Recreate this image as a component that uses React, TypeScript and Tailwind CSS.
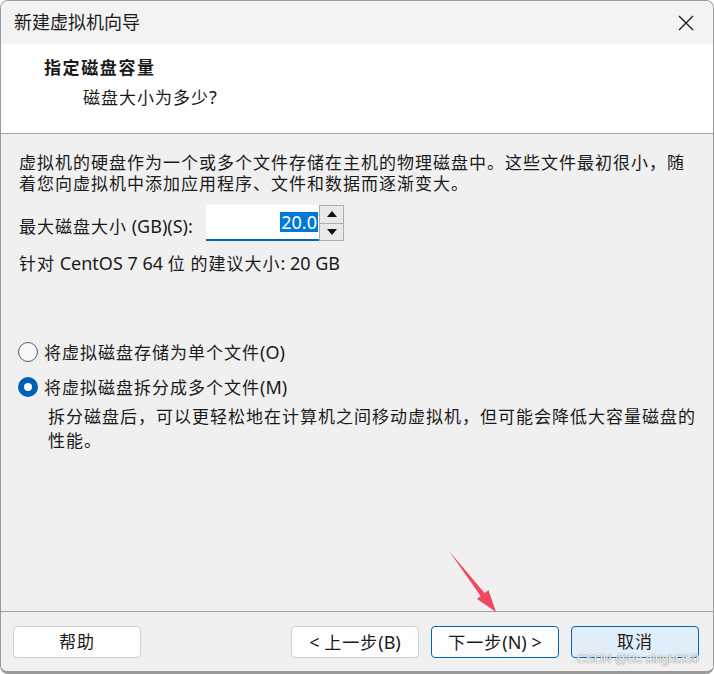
import React from 'react';

const FONT = "font-['Noto_Sans','Noto_Sans_CJK_SC',sans-serif]";

// CJK runs get a little tracking so they advance like the SimSun text in the dialog
function Mixed({ text }: { text: string }) {
  const parts = text.split(/([\x00-\xff]+)/);
  return (
    <span>
      {parts.map((p, i) =>
        p === '' ? null : /[\x00-\xff]/.test(p) ? (
          <span key={i} className="text-[18px]">
            {p}
          </span>
        ) : (
          <span key={i} className="tracking-[1px]">
            {p}
          </span>
        ),
      )}
    </span>
  );
}

function Radio({ checked, label }: { checked: boolean; label: string }) {
  return (
    <div className="flex h-[24px] items-center">
      {checked ? (
        <span className="flex h-[20px] w-[20px] items-center justify-center rounded-full bg-[#005fb8]">
          <span className="h-[8px] w-[8px] rounded-full bg-white" />
        </span>
      ) : (
        <span className="h-[20px] w-[20px] rounded-full border border-[#5c5c5c] bg-[#f7f7f7]" />
      )}
      <span className="ml-[6px]">
        <Mixed text={label} />
      </span>
    </div>
  );
}

function Btn({ label, primary, accent }: { label: string; primary?: boolean; accent?: boolean }) {
  return (
    <button
      className={`flex h-[32px] w-[128px] items-center justify-center rounded-[4px] border text-[17px] ${
        accent
          ? 'border-[#0067c0] bg-[#e0eef9]'
          : primary
            ? 'border-[#0067c0] bg-[#fdfdfd]'
            : 'border-[#d0d0d0] bg-[#fdfdfd]'
      }`}
    >
      <Mixed text={label} />
    </button>
  );
}

export default function App() {
  return (
    <div className={`relative h-[674px] w-[714px] bg-white text-[#1a1a1a] ${FONT}`}>
      <div className="flex h-full flex-col overflow-hidden rounded-[8px] border border-b-[3px] border-[#9a9a9a]">
        {/* title bar */}
        <div className="flex h-[43px] shrink-0 items-center justify-between bg-[#f3f3f3] pl-[13px] pr-[18px]">
          <span className="text-[18px]">新建虚拟机向导</span>
          <svg width="16" height="16" viewBox="0 0 16 16" className="mr-[1px]">
            <path d="M1 1 L15 15 M15 1 L1 15" stroke="#1a1a1a" strokeWidth="1.3" />
          </svg>
        </div>

        {/* header */}
        <div className="flex h-[90px] shrink-0 flex-col border-b border-[#a0a0a0] bg-white pl-[43px] pt-[12px] text-[17px]">
          <div className="h-[24px] font-bold leading-[24px] tracking-[1.6px]">指定磁盘容量</div>
          <div className="ml-[39px] mt-[5px] h-[24px] leading-[24px]">
            <Mixed text="磁盘大小为多少?" />
          </div>
        </div>

        {/* body */}
        <div className="flex flex-1 flex-col bg-[#f0f0f0] pl-[18px] pt-[18px] text-[17px]">
          <p className="leading-[21px]">
            <Mixed text="虚拟机的硬盘作为一个或多个文件存储在主机的物理磁盘中。这些文件最初很小，随" />
            <br />
            <Mixed text="着您向虚拟机中添加应用程序、文件和数据而逐渐变大。" />
          </p>

          <div className="mt-[11px] flex items-start">
            <span className="mt-[9px] w-[187px] leading-[24px]">
              <Mixed text="最大磁盘大小 (GB)(S):" />
            </span>
            <div className="flex h-[36px] w-[113px] items-center justify-end border-b-2 border-[#0067c0] bg-white pr-[1px]">
              <span className="bg-[#0078d7] px-px text-[18px] leading-[20px] text-white">20.0</span>
            </div>
            <div className="flex h-[36px] w-[25px] flex-col border border-[#adadad] bg-[#f0f0f0]">
              <div className="flex flex-1 items-center justify-center border-b border-[#adadad] bg-[#e9e9e9]">
                <svg width="10" height="6" viewBox="0 0 10 6">
                  <path d="M5 0 L10 6 L0 6 Z" fill="#111" />
                </svg>
              </div>
              <div className="flex flex-1 items-center justify-center bg-[#e9e9e9]">
                <svg width="10" height="6" viewBox="0 0 10 6">
                  <path d="M0 0 L10 0 L5 6 Z" fill="#111" />
                </svg>
              </div>
            </div>
          </div>

          <div className="mt-[10px] leading-[24px]">
            <Mixed text="针对 CentOS 7 64 位 的建议大小: 20 GB" />
          </div>

          <div className="mt-[64px] -ml-px">
            <Radio checked={false} label="将虚拟磁盘存储为单个文件(O)" />
          </div>
          <div className="mt-[11px] -ml-px">
            <Radio checked label="将虚拟磁盘拆分成多个文件(M)" />
          </div>
          <p className="ml-[29px] mt-[6px] leading-[24px]">
            <Mixed text="拆分磁盘后，可以更轻松地在计算机之间移动虚拟机，但可能会降低大容量磁盘的" />
            <br />
            <Mixed text="性能。" />
          </p>
        </div>

        {/* footer */}
        <div className="flex h-[60px] shrink-0 items-start border-t border-[#a0a0a0] bg-[#f0f0f0] pl-[12px] pt-[14px]">
          <Btn label="帮助" />
          <div className="ml-[150px] flex gap-[12px]">
            <Btn label="< 上一步(B)" />
            <Btn label="下一步(N) >" primary />
            <Btn label="取消" accent />
          </div>
        </div>
      </div>

      {/* annotation arrow */}
      <svg className="pointer-events-none absolute left-0 top-0" width="714" height="674">
        <polygon
          points="449,551 484.6,593.1 488.5,590 496,612 477,599 480.6,596.1"
          fill="#ef4a5b"
        />
      </svg>

      {/* watermark */}
      <span className="pointer-events-none absolute left-[577px] top-[652px] whitespace-nowrap font-['Liberation_Sans',sans-serif] text-[12.5px] leading-[14px] tracking-[-0.2px] text-[#f4f4f4] [text-shadow:0_0_1px_#8a8a8a,0_0_1px_#8a8a8a]">
        CSDN @Be alright350
      </span>
    </div>
  );
}
